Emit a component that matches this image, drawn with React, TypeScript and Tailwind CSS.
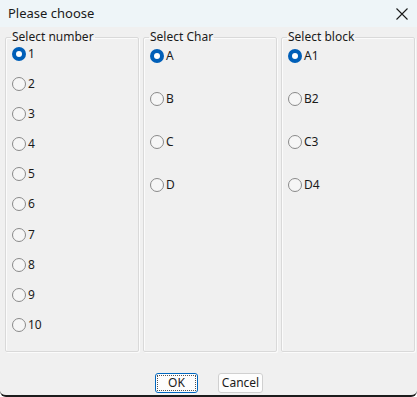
import React from "react";

const Radio = ({ label, checked }: { label: string; checked?: boolean }) => {
  return (
    <div className="flex items-center h-[18px]">
      {checked ? (
        <span className="w-[14px] h-[14px] rounded-full bg-[#005fb8] flex items-center justify-center">
          <span className="w-[6px] h-[6px] rounded-full bg-white" />
        </span>
      ) : (
        <span className="w-[14px] h-[14px] rounded-full border border-[#8a8a8a] bg-[#f6f6f6]" />
      )}
      <span className="ml-[2px] text-[12px] text-[#1b1b1b]">{label}</span>
    </div>
  );
};

const Group = ({
  title,
  items,
  gap,
}: {
  title: string;
  items: string[];
  gap: string;
}) => {
  return (
    <fieldset className="w-[134px] h-[323px] border border-[#d9d9d9] shadow-[inset_1px_1px_0_#fbfbfb,1px_1px_0_#fbfbfb] rounded-[2px] px-[6px]">
      <legend className="ml-[-1px] px-[1px] text-[12px] leading-[16px] text-[#1b1b1b]">
        {title}
      </legend>
      <div className={`flex flex-col ${gap}`}>
        {items.map((it, i) => (
          <Radio key={it} label={it} checked={i === 0} />
        ))}
      </div>
    </fieldset>
  );
};

export default function App() {
  return (
    <div
      className="w-[417px] h-[397px] bg-[#f0f0f0] flex flex-col border-b-2 border-[#1c1c1c] rounded-b-[6px] overflow-hidden"
      style={{ fontFamily: '"Noto Sans", "Open Sans", sans-serif' }}
    >
      <div className="h-[27px] bg-[#eef5f8] flex items-center justify-between pl-[8px] pr-[8px]">
        <span className="text-[13px] text-[#1a1a1a]">Please choose</span>
        <svg width="12" height="12" viewBox="0 0 12 12" className="mr-[1px]">
          <path d="M0.5 0.5 L11.5 11.5 M11.5 0.5 L0.5 11.5" stroke="#1a1a1a" strokeWidth="1.1" />
        </svg>
      </div>
      <div className="flex gap-[4px] pl-[5px] pt-[2px]">
        <Group
          title="Select number"
          items={["1", "2", "3", "4", "5", "6", "7", "8", "9", "10"]}
          gap="gap-[12.1px]"
        />
        <Group title="Select Char" items={["A", "B", "C", "D"]} gap="gap-[25px] pt-[2px]" />
        <Group title="Select block" items={["A1", "B2", "C3", "D4"]} gap="gap-[25px] pt-[2px]" />
      </div>
      <div className="flex justify-center gap-[20px] mt-[21px] pl-[1px]">
        <button className="w-[43px] h-[20px] rounded-[3px] border border-[#0067c0] bg-[#fdfdfd] text-[12px] text-[#1b1b1b] p-[1px]">
          <span className="flex w-full h-full items-center justify-center border border-dotted border-[#555]">
            OK
          </span>
        </button>
        <button className="w-[45px] h-[20px] rounded-[3px] border border-[#d0d0d0] bg-[#fdfdfd] text-[12px] text-[#1b1b1b]">
          Cancel
        </button>
      </div>
    </div>
  );
}
